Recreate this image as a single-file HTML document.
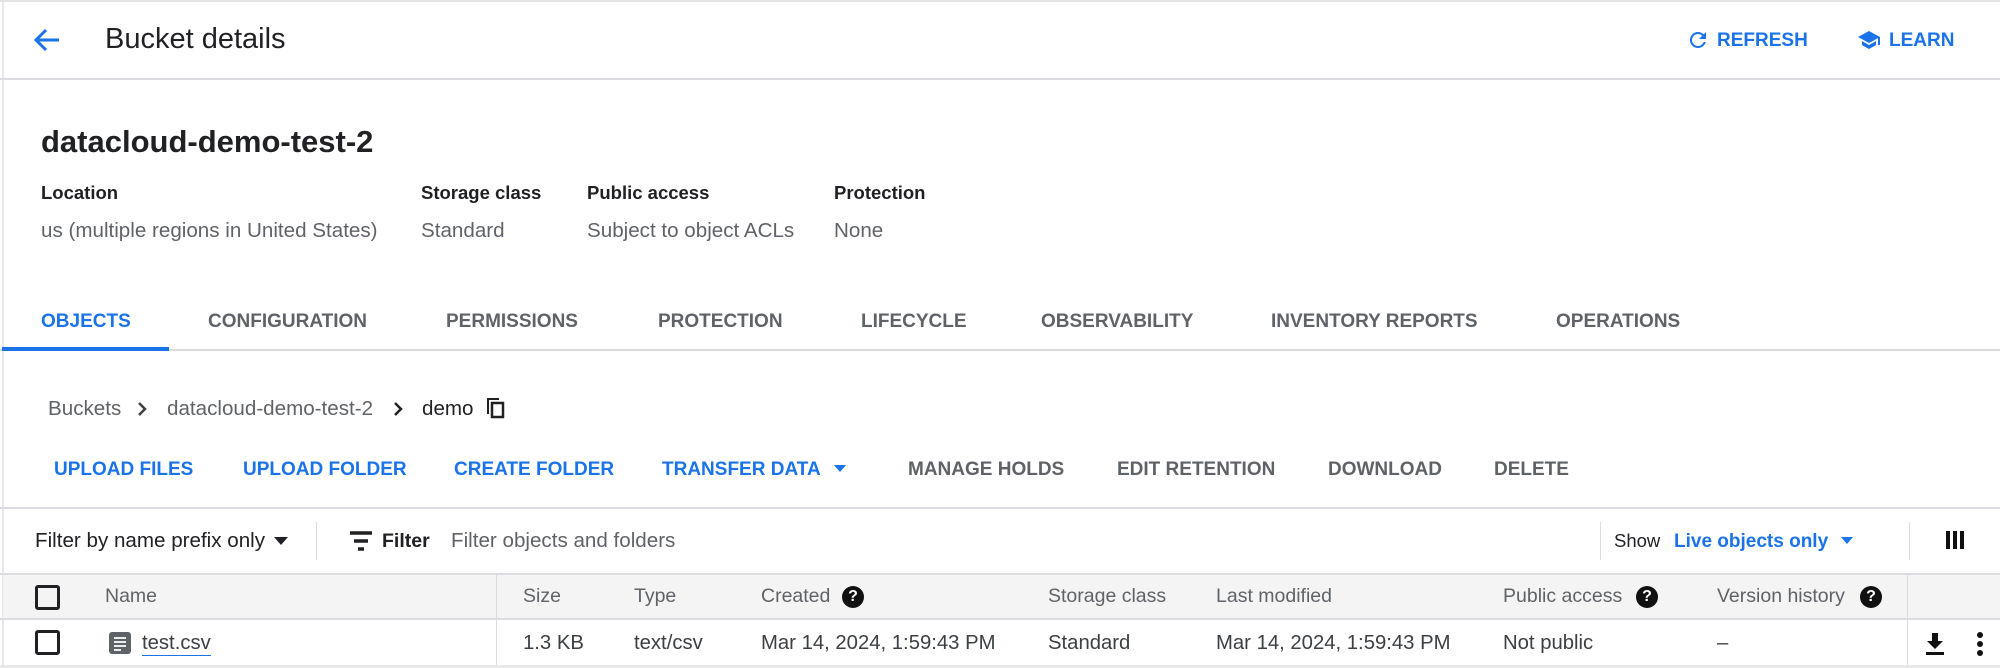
<!DOCTYPE html>
<html><head><style>
*{margin:0;padding:0;box-sizing:border-box}
body{width:2000px;height:668px;overflow:hidden;background:#fff;font-family:"Liberation Sans",Arial,sans-serif;color:#202124;position:relative}
.a{position:absolute;white-space:nowrap;line-height:1}
.blue{color:#1a73e8}
.gray{color:#5f6368}
.m{font-weight:bold}
.tab{font-size:19px;color:#5f6368;top:312px}
.act{font-size:19px;top:460px}
.th{font-size:19.5px;color:#5f6368;top:587px}
.td{font-size:20.3px;color:#3c4043;top:633px}
.hl{position:absolute;background:#dadce0;height:2px}
.vl{position:absolute;background:#dadce0;width:1px}
.cb{position:absolute;width:25px;height:25px;border:3px solid #202124;border-radius:3px}
.q{position:absolute;width:22px;height:22px;border-radius:50%;background:#111;color:#fff;font-size:16px;font-weight:bold;text-align:center;line-height:22px}
</style></head><body>
<div class="vl" style="left:2px;top:0;height:668px;background:#e8e8e8;width:2px"></div>
<div class="hl" style="left:0;top:0;width:2000px;background:#e4e4e4"></div>
<svg class="a" style="left:33px;top:27px" width="28" height="26" viewBox="0 0 28 26"><path d="M26 13H4M13 3L3 13l10 10" stroke="#1a73e8" stroke-width="3" fill="none"/></svg>
<div class="a" style="left:105px;top:25px;font-size:29px">Bucket details</div>
<svg class="a" style="left:1686px;top:28px" width="24" height="24" viewBox="0 0 24 24"><path fill="#1a73e8" d="M17.65 6.35A7.96 7.96 0 0 0 12 4a8 8 0 1 0 7.73 10h-2.08A6 6 0 1 1 12 6c1.66 0 3.14.69 4.22 1.78L13 11h7V4l-2.35 2.35z"/></svg>
<div class="a blue m" style="left:1717px;top:31px;font-size:19px">REFRESH</div>
<svg class="a" style="left:1857px;top:28px" width="24" height="24" viewBox="0 0 24 24"><path fill="#1a73e8" d="M5 13.18v4L12 21l7-3.82v-4L12 17l-7-3.82zM12 3L1 9l11 6 9-4.91V17h2V9L12 3z"/></svg>
<div class="a blue m" style="left:1889px;top:31px;font-size:19px">LEARN</div>
<div class="hl" style="left:0;top:78px;width:2000px"></div>
<div class="a" style="left:41px;top:126px;font-size:31px;font-weight:bold">datacloud-demo-test-2</div>
<div class="a m" style="left:41px;top:184px;font-size:18.5px">Location</div>
<div class="a m" style="left:421px;top:184px;font-size:18.5px">Storage class</div>
<div class="a m" style="left:587px;top:184px;font-size:18.5px">Public access</div>
<div class="a m" style="left:834px;top:184px;font-size:18.5px">Protection</div>
<div class="a gray" style="left:41px;top:221px;font-size:20.6px">us (multiple regions in United States)</div>
<div class="a gray" style="left:421px;top:221px;font-size:20.6px">Standard</div>
<div class="a gray" style="left:587px;top:221px;font-size:20.6px">Subject to object ACLs</div>
<div class="a gray" style="left:834px;top:221px;font-size:20.6px">None</div>
<div class="a tab m" style="left:41px;color:#1a73e8">OBJECTS</div>
<div class="a tab m" style="left:208px">CONFIGURATION</div>
<div class="a tab m" style="left:446px">PERMISSIONS</div>
<div class="a tab m" style="left:658px">PROTECTION</div>
<div class="a tab m" style="left:861px">LIFECYCLE</div>
<div class="a tab m" style="left:1041px">OBSERVABILITY</div>
<div class="a tab m" style="left:1271px">INVENTORY REPORTS</div>
<div class="a tab m" style="left:1556px">OPERATIONS</div>
<div class="hl" style="left:0;top:349px;width:2000px"></div>
<div style="position:absolute;left:2px;top:347px;width:167px;height:4px;background:#1a73e8"></div>
<div class="a gray" style="left:48px;top:399px;font-size:20.6px">Buckets</div>
<svg class="a" style="left:135px;top:400px" width="14" height="18" viewBox="0 0 14 18"><path d="M4 3l6 6-6 6" stroke="#3c4043" stroke-width="2.5" fill="none"/></svg>
<div class="a gray" style="left:167px;top:399px;font-size:20.6px">datacloud-demo-test-2</div>
<svg class="a" style="left:391px;top:400px" width="14" height="18" viewBox="0 0 14 18"><path d="M4 3l6 6-6 6" stroke="#202124" stroke-width="2.5" fill="none"/></svg>
<div class="a" style="left:422px;top:399px;font-size:20.6px">demo</div>
<svg class="a" style="left:485px;top:396px" width="22" height="24" viewBox="0 0 22 24"><path d="M2 2h12v2H4v14H2z" fill="#202124"/><rect x="7" y="7" width="11" height="14" stroke="#202124" stroke-width="2.5" fill="none"/></svg>
<div class="a act blue m" style="left:54px">UPLOAD FILES</div>
<div class="a act blue m" style="left:243px">UPLOAD FOLDER</div>
<div class="a act blue m" style="left:454px">CREATE FOLDER</div>
<div class="a act blue m" style="left:662px">TRANSFER DATA</div>
<svg class="a" style="left:833px;top:463px" width="14" height="10"><path d="M1 2h12L7 9z" fill="#1a73e8"/></svg>
<div class="a act gray m" style="left:908px">MANAGE HOLDS</div>
<div class="a act gray m" style="left:1117px">EDIT RETENTION</div>
<div class="a act gray m" style="left:1328px">DOWNLOAD</div>
<div class="a act gray m" style="left:1494px">DELETE</div>
<div class="hl" style="left:0;top:507px;width:2000px"></div>
<div class="a" style="left:35px;top:531px;font-size:20.6px">Filter by name prefix only</div>
<svg class="a" style="left:273px;top:535px" width="16" height="12"><path d="M1 2h14L8 10z" fill="#202124"/></svg>
<div class="vl" style="left:316px;top:522px;height:38px"></div>
<svg class="a" style="left:349px;top:530px" width="24" height="22"><path d="M1 3h22M5 11h14M9 19h6" stroke="#202124" stroke-width="3.5"/></svg>
<div class="a m" style="left:382px;top:532px;font-size:19.5px">Filter</div>
<div class="a gray" style="left:451px;top:531px;font-size:20.6px">Filter objects and folders</div>
<div class="vl" style="left:1600px;top:522px;height:38px"></div>
<div class="a" style="left:1614px;top:532px;font-size:18.5px">Show</div>
<div class="a blue" style="left:1674px;top:532px;font-size:19px;font-weight:bold">Live objects only</div>
<svg class="a" style="left:1840px;top:535px" width="14" height="10"><path d="M1 2h12L7 9z" fill="#1a73e8"/></svg>
<div class="vl" style="left:1909px;top:522px;height:38px"></div>
<svg class="a" style="left:1945px;top:530px" width="20" height="20"><path d="M1 1h4v18H1zM8 1h4v18H8zM15 1h4v18h-4z" fill="#111"/></svg>
<div style="position:absolute;left:3px;top:574px;width:1997px;height:45px;background:#f4f4f4"></div>
<div class="hl" style="left:0;top:573px;width:2000px"></div>
<div class="hl" style="left:0;top:618px;width:2000px"></div>
<div class="hl" style="left:0;top:665px;width:2000px;height:3px;background:#e8e8e8"></div>
<div class="vl" style="left:496px;top:574px;height:91px"></div>
<div class="vl" style="left:1907px;top:574px;height:91px"></div>
<div class="cb" style="left:35px;top:585px"></div>
<div class="cb" style="left:35px;top:630px"></div>
<div class="a th" style="left:105px">Name</div>
<div class="a th" style="left:523px">Size</div>
<div class="a th" style="left:634px">Type</div>
<div class="a th" style="left:761px">Created</div><div class="q" style="left:842px;top:586px">?</div>
<div class="a th" style="left:1048px">Storage class</div>
<div class="a th" style="left:1216px">Last modified</div>
<div class="a th" style="left:1503px">Public access</div><div class="q" style="left:1636px;top:586px">?</div>
<div class="a th" style="left:1717px">Version history</div><div class="q" style="left:1860px;top:586px">?</div>
<svg class="a" style="left:108px;top:631px" width="24" height="24" viewBox="0 0 24 24"><rect x="1" y="1" width="22" height="22" rx="3" fill="#5f6368"/><path d="M6 7h12M6 11h12M6 15h12M6 19h7" stroke="#fff" stroke-width="1.8"/></svg>
<div class="a td blue" style="left:142px;border-bottom:1px solid #1a73e8;padding-bottom:2px">test.csv</div>
<div class="a td" style="left:523px">1.3 KB</div>
<div class="a td" style="left:634px">text/csv</div>
<div class="a td" style="left:761px">Mar 14, 2024, 1:59:43 PM</div>
<div class="a td" style="left:1048px">Standard</div>
<div class="a td" style="left:1216px">Mar 14, 2024, 1:59:43 PM</div>
<div class="a td" style="left:1503px">Not public</div>
<div class="a td" style="left:1717px">–</div>
<svg class="a" style="left:1924px;top:632px" width="22" height="24" viewBox="0 0 22 24"><path d="M8 1h6v8h5l-8 8-8-8h5z" fill="#111"/><rect x="2" y="20" width="18" height="3" fill="#111"/></svg>
<svg class="a" style="left:1975px;top:631px" width="10" height="26"><circle cx="5" cy="4" r="3" fill="#111"/><circle cx="5" cy="13" r="3" fill="#111"/><circle cx="5" cy="22" r="3" fill="#111"/></svg>
</body></html>
